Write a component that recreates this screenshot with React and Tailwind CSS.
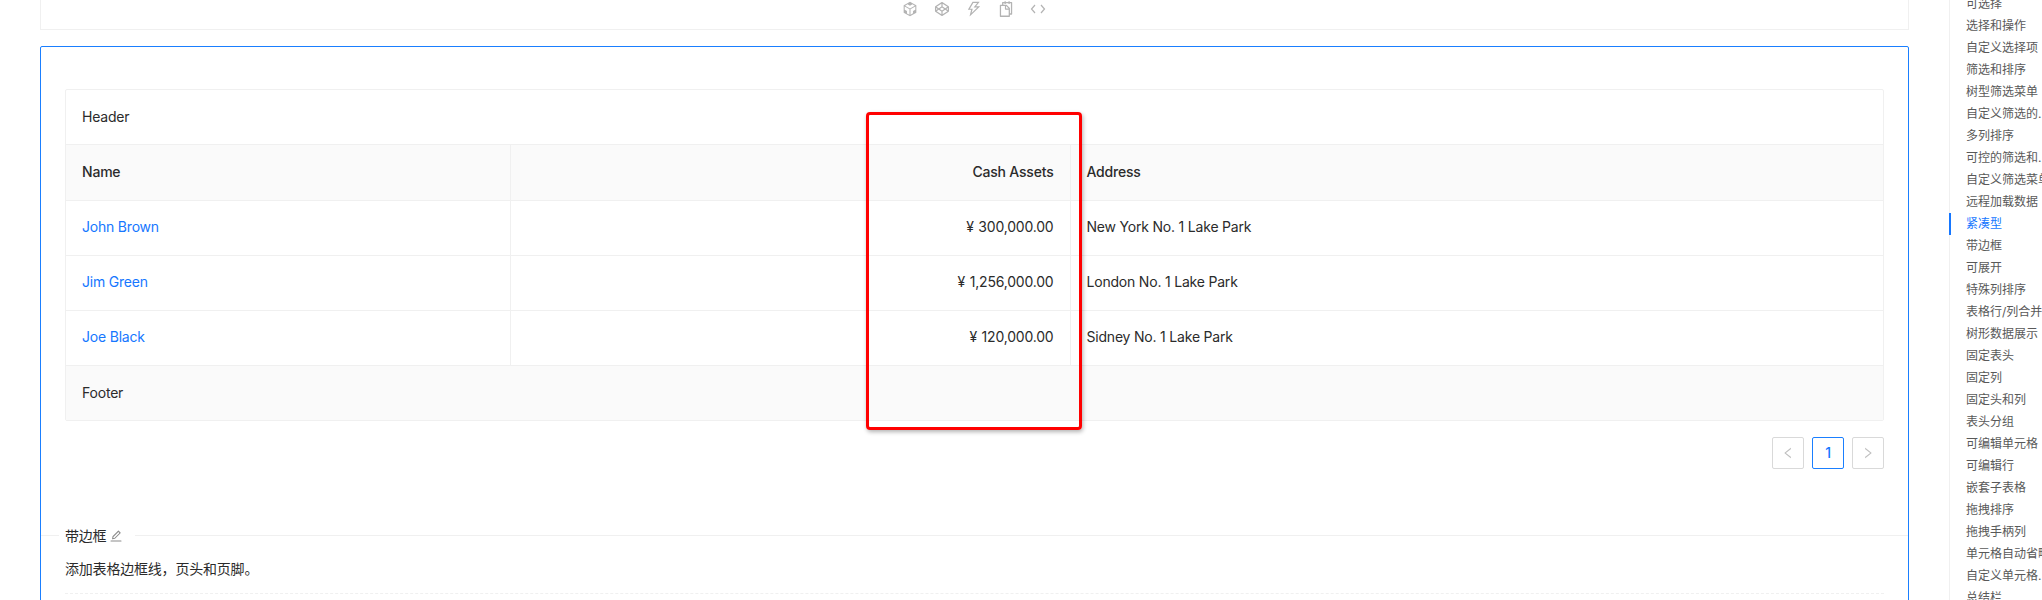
import React from "react";
import {
  AiOutlineCodeSandbox,
  AiOutlineCodepen,
  AiOutlineThunderbolt,
  AiOutlineSnippets,
  AiOutlineEdit,
  AiOutlineLeft,
  AiOutlineRight,
} from "react-icons/ai";

const ROWS = [
  { name: "John Brown", money: "¥\u2009\u2009300,000.00", address: "New York No. 1 Lake Park" },
  { name: "Jim Green", money: "¥\u2009\u20091,256,000.00", address: "London No. 1 Lake Park" },
  { name: "Joe Black", money: "¥\u2009\u2009120,000.00", address: "Sidney No. 1 Lake Park" },
];

const NAV_ITEMS = [
  "可选择",
  "选择和操作",
  "自定义选择项",
  "筛选和排序",
  "树型筛选菜单",
  "自定义筛选的...",
  "多列排序",
  "可控的筛选和...",
  "自定义筛选菜单",
  "远程加载数据",
  "紧凑型",
  "带边框",
  "可展开",
  "特殊列排序",
  "表格行/列合并",
  "树形数据展示",
  "固定表头",
  "固定列",
  "固定头和列",
  "表头分组",
  "可编辑单元格",
  "可编辑行",
  "嵌套子表格",
  "拖拽排序",
  "拖拽手柄列",
  "单元格自动省略",
  "自定义单元格...",
  "总结栏",
];

const App = () => {
  return (
    <div className="relative flex h-[600px] w-[2042px] overflow-hidden bg-white font-['Inter','Noto_Sans_CJK_SC',sans-serif] text-sm tracking-[-0.2px] text-[#2b2b2b]">
      <main className="ml-[40px] w-[1869px] shrink-0">
        {/* previous demo, only the toolbar is in view */}
        <div className="flex h-[30px] items-start justify-center border-x border-b border-[#f0f0f0] pr-[2px] text-[#b3b3b3]">
          <div className="flex items-center gap-[14px] text-[18px]">
            <AiOutlineCodeSandbox />
            <AiOutlineCodepen />
            <AiOutlineThunderbolt />
            <AiOutlineSnippets />
            <svg width="18" height="18" viewBox="0 0 18 18" fill="none" stroke="currentColor" strokeWidth="1.2">
              <path d="M6 5 2.500 9 6 13M12 5l3.500 4L12 13" />
            </svg>
          </div>
        </div>

        <section className="mt-[16px] h-[560px] rounded-[2px] border border-[#1a7fff]">
          <div className="px-[24px] pt-[42px]">
            <div className="rounded-[2px] border border-[#f0f0f0]">
              <div className="flex h-[55px] items-center border-b border-[#f0f0f0] px-[16px]">Header</div>
              <table className="w-full table-fixed border-collapse">
                <colgroup>
                  <col className="w-[444px]" />
                  <col className="w-[560px]" />
                  <col />
                </colgroup>
                <thead>
                  <tr className="h-[55px] border-b border-[#f0f0f0] bg-[#fafafa]">
                    <th className="border-r border-[#f0f0f0] px-[16px] text-left font-medium">Name</th>
                    <th className="border-r border-[#f0f0f0] px-[16px] text-right font-medium">Cash Assets</th>
                    <th className="px-[16px] text-left font-medium">Address</th>
                  </tr>
                </thead>
                <tbody>
                  {ROWS.map((row) => (
                    <tr key={row.name} className="h-[55px] border-b border-[#f0f0f0]">
                      <td className="border-r border-[#f0f0f0] px-[16px] pb-[1px] text-[#1677ff]">{row.name}</td>
                      <td className="border-r border-[#f0f0f0] px-[16px] pb-[1px] text-right">{row.money}</td>
                      <td className="px-[16px] pb-[1px]">{row.address}</td>
                    </tr>
                  ))}
                </tbody>
              </table>
              <div className="flex h-[54px] items-center bg-[#fafafa] px-[16px]">Footer</div>
            </div>

            <div className="mt-[16px] flex justify-end gap-[8px]">
              <button className="flex h-[32px] w-[32px] items-center justify-center rounded-[2px] border border-[#d9d9d9] text-[14px] text-[#bfbfbf]">
                <AiOutlineLeft />
              </button>
              <button className="flex h-[32px] w-[32px] items-center justify-center rounded-[2px] border border-[#1a7fff] font-medium text-[#1677ff]">
                1
              </button>
              <button className="flex h-[32px] w-[32px] items-center justify-center rounded-[2px] border border-[#d9d9d9] text-[14px] text-[#bfbfbf]">
                <AiOutlineRight />
              </button>
            </div>
          </div>

          {/* demo meta */}
          <div className="mt-[66px] border-t border-[#f0f0f0] px-[24px]">
            <div className="-mt-[11px] -ml-[6px] flex h-[22px] w-fit items-center gap-[3px] bg-white px-[6px] pr-[12px]">
              带边框
              <AiOutlineEdit className="text-[#8c8c8c]" />
            </div>
            <p className="mt-[11px] h-[36px] border-b border-dashed border-[#f0f0f0] leading-[22px]">
              添加表格边框线，页头和页脚。
            </p>
          </div>
        </section>
      </main>

      <nav className="ml-[40px] flex-1 border-l border-[#f0f0f0]">
        <ul className="-mt-[7px]">
          {NAV_ITEMS.map((item) => {
            const active = item === "紧凑型";
            return (
              <li
                key={item}
                className={
                  active
                    ? "-ml-px h-[22px] whitespace-nowrap border-l-2 border-[#1677ff] pl-[15px] text-[12px] leading-[22px] tracking-normal text-[#1677ff]"
                    : "h-[22px] whitespace-nowrap pl-[16px] text-[12px] leading-[22px] tracking-normal text-[#595959]"
                }
              >
                {item}
              </li>
            );
          })}
        </ul>
      </nav>

      {/* annotation drawn over the screenshot */}
      <div className="pointer-events-none absolute left-[866px] top-[112px] h-[318px] w-[216px] rounded-[4px] border-[3px] border-[#ff0000] shadow-[1px_2px_4px_rgba(0,0,0,0.3)]" />
    </div>
  );
};

export default App;
